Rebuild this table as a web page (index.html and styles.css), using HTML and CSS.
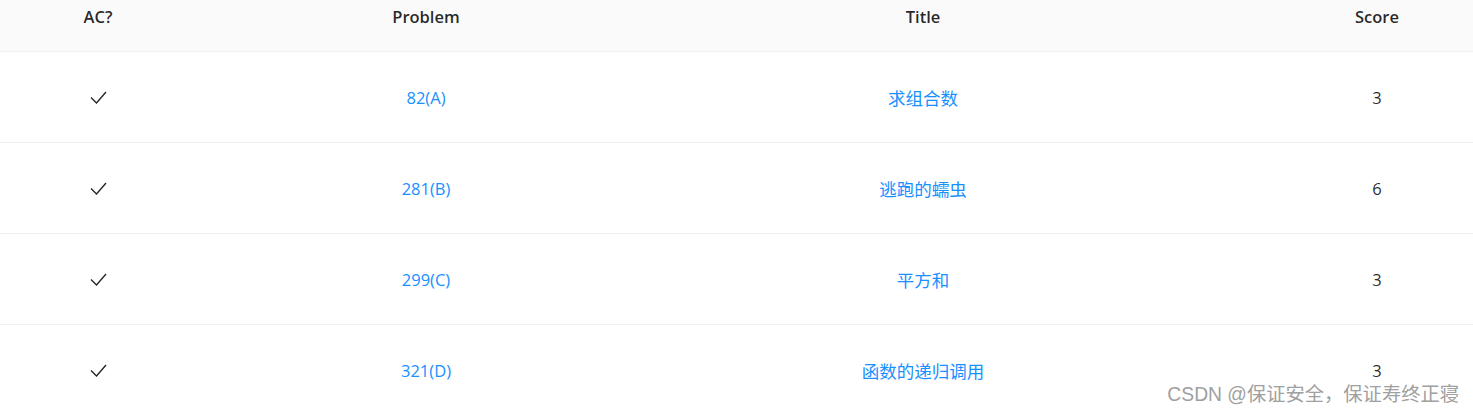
FILE: index.html
```html
<!DOCTYPE html>
<html lang="zh">
<head>
<meta charset="utf-8">
<link rel="stylesheet" href="styles.css">
</head>
<body>
<div class="wrap">
  <table class="tbl">
    <colgroup>
      <col class="c1"><col class="c2"><col class="c3"><col class="c4">
    </colgroup>
    <thead>
      <tr><th>AC?</th><th>Problem</th><th>Title</th><th>Score</th></tr>
    </thead>
    <tbody>
      <tr>
        <td><svg class="check" viewBox="0 0 17 13" width="17" height="13"><polyline points="1,6.5 6.5,12 16,1"/></svg></td>
        <td><a class="link">82(A)</a></td>
        <td><a class="link cjk">求组合数</a></td>
        <td>3</td>
      </tr>
      <tr>
        <td><svg class="check" viewBox="0 0 17 13" width="17" height="13"><polyline points="1,6.5 6.5,12 16,1"/></svg></td>
        <td><a class="link">281(B)</a></td>
        <td><a class="link cjk">逃跑的蠕虫</a></td>
        <td>6</td>
      </tr>
      <tr>
        <td><svg class="check" viewBox="0 0 17 13" width="17" height="13"><polyline points="1,6.5 6.5,12 16,1"/></svg></td>
        <td><a class="link">299(C)</a></td>
        <td><a class="link cjk">平方和</a></td>
        <td>3</td>
      </tr>
      <tr>
        <td><svg class="check" viewBox="0 0 17 13" width="17" height="13"><polyline points="1,6.5 6.5,12 16,1"/></svg></td>
        <td><a class="link">321(D)</a></td>
        <td><a class="link cjk">函数的递归调用</a></td>
        <td>3</td>
      </tr>
    </tbody>
  </table>
</div>
<div class="watermark">CSDN @保证安全，保证寿终正寝</div>
</body>
</html>
```
FILE: styles.css
```css
html, body {
  margin: 0;
  padding: 0;
  background: #fff;
}
body {
  font-family: "Open Sans", "Noto Sans CJK SC", sans-serif;
  font-size: 16.5px;
  color: rgba(0, 0, 0, 0.85);
  overflow: hidden;
  height: 413px;
  position: relative;
}
.wrap {
  width: 1473px;
  overflow: hidden;
}
.tbl {
  width: 1564px;
  table-layout: fixed;
  border-collapse: collapse;
}
.c1 { width: 196px; }
.c2 { width: 460px; }
.c3 { width: 534px; }
.c4 { width: 374px; }
.tbl th {
  background: #fafafa;
  font-weight: 600;
  line-height: 22px;
  padding: 6px 16px 23px;
  text-align: center;
  border-bottom: 1px solid #f0f0f0;
  color: rgba(0, 0, 0, 0.85);
}
.tbl td {
  height: 88px;
  line-height: 22px;
  padding: 2px 16px 0;
  text-align: center;
  border-bottom: 1px solid #f0f0f0;
  vertical-align: middle;
}
.link {
  color: #1890ff;
  text-decoration: none;
}
.cjk {
  font-family: "Noto Sans CJK SC", sans-serif;
  font-size: 17.5px;
  line-height: 22px;
}
.check {
  display: block;
  margin: -2px auto 0;
  fill: none;
  stroke: rgba(0, 0, 0, 0.85);
  stroke-width: 1.4;
}
.watermark {
  position: absolute;
  right: 14px;
  bottom: 6px;
  font-family: "Liberation Sans", "Noto Sans CJK SC", sans-serif;
  font-size: 19.3px;
  color: #a0a0a0;
  line-height: 24px;
}
```
